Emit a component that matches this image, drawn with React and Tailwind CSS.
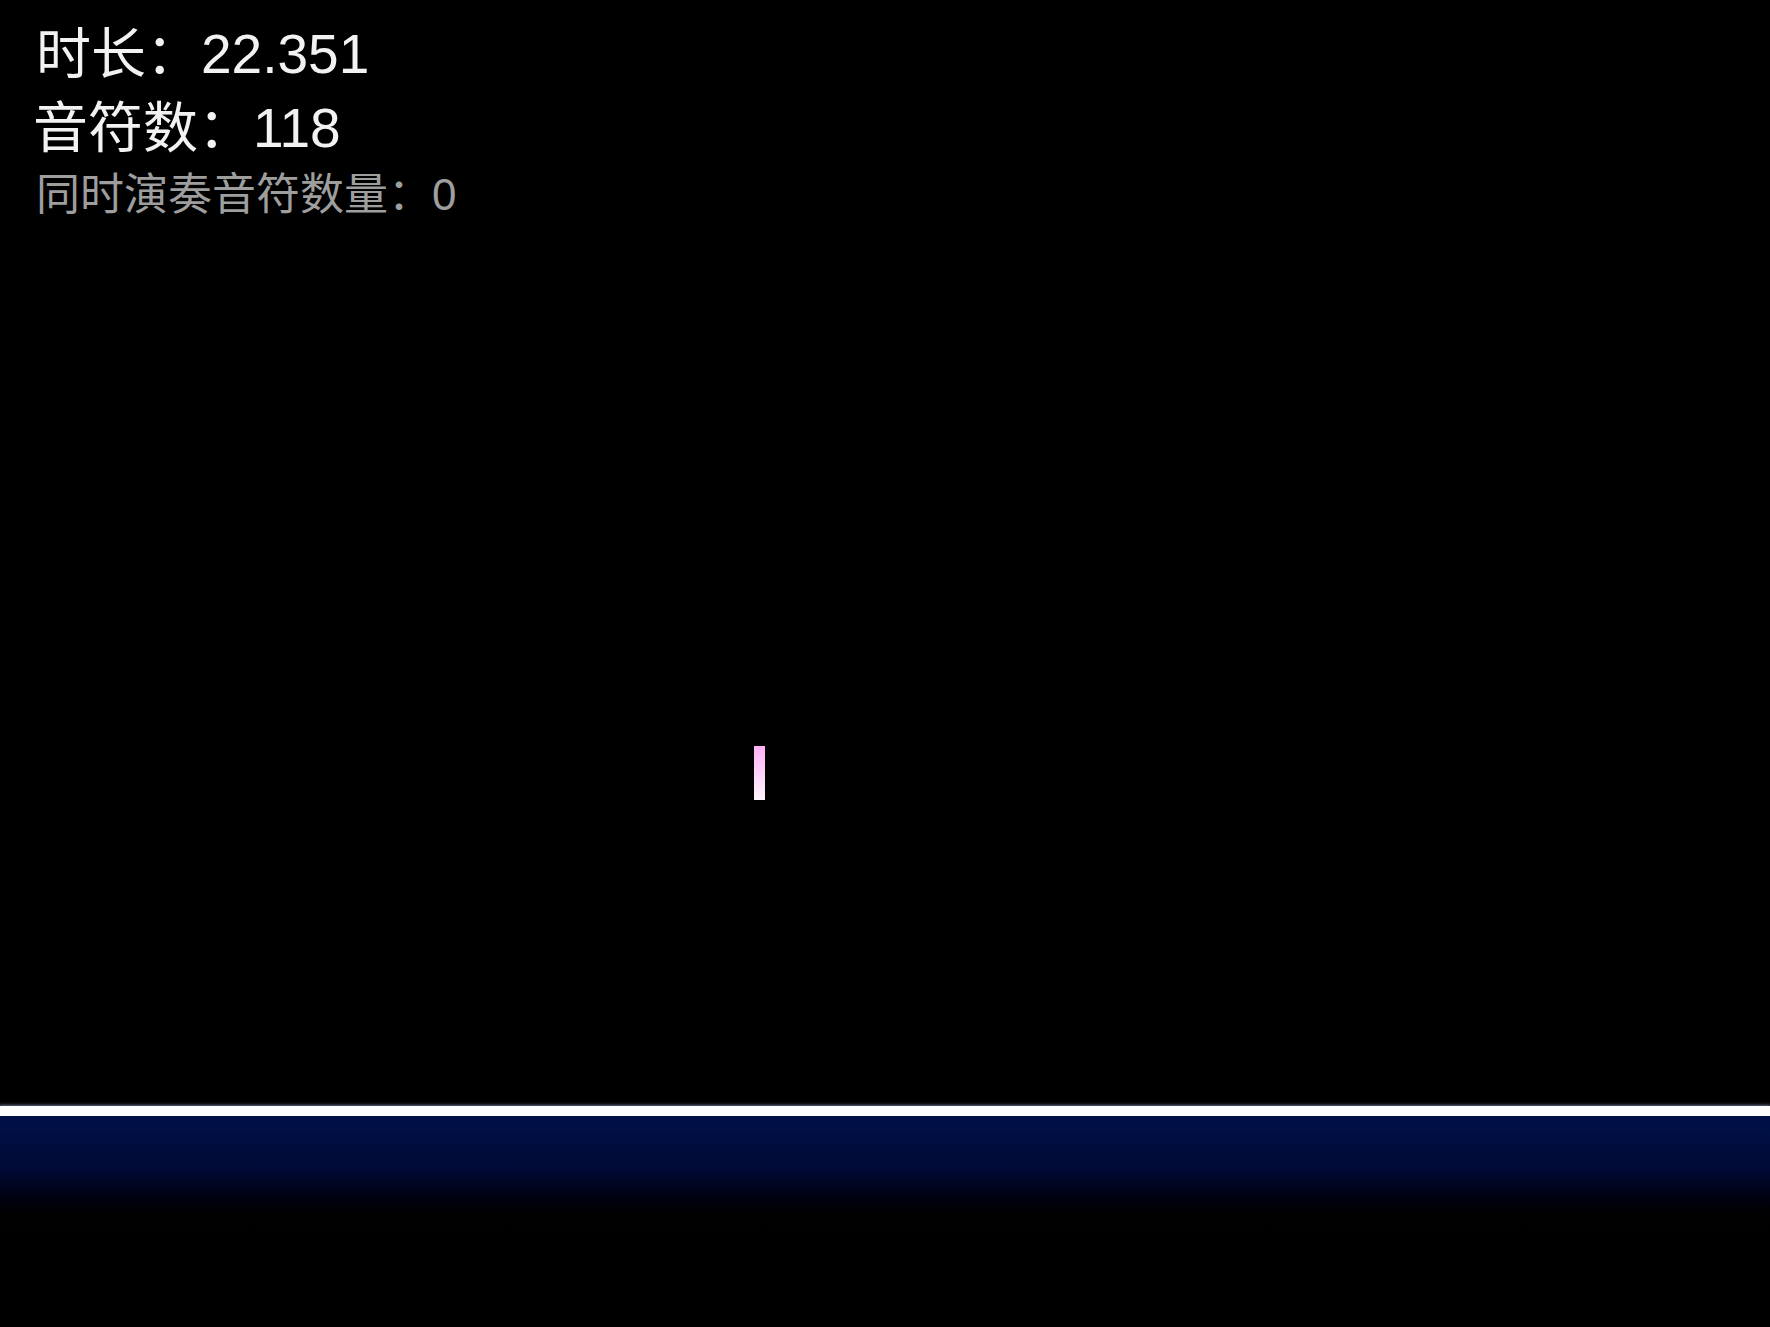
import React from 'react';

const FONT = { fontFamily: '"Liberation Sans", "Noto Sans CJK SC", sans-serif' };

const stats = [
  { label: '时长：', value: '22.351', cls: 'pl-[3px] text-[55px] leading-[74px] text-[#f2f2f2]' },
  { label: '音符数：', value: '118', cls: 'text-[55px] leading-[74px] text-[#f2f2f2]' },
  { label: '同时演奏音符数量：', value: '0', cls: 'pl-[3px] text-[44px] leading-[59px] text-[#9e9e9e]' },
];

export default function App() {
  return (
    <div className="relative flex h-screen w-full flex-col overflow-hidden bg-black" style={FONT}>
      {/* stats overlay */}
      <div className="pl-[33px] pt-[17px]">
        {stats.map((s) => (
          <div key={s.label} className={`whitespace-nowrap ${s.cls}`}>
            <span>{s.label}</span>
            <span>{s.value}</span>
          </div>
        ))}
      </div>

      <div className="flex-1" />

      {/* falling note */}
      <div className="absolute left-[754px] top-[746px] h-[54px] w-[11px] bg-linear-to-b from-[#ffb0f8] to-[#fff4fd]" />

      {/* hit line + glow */}
      <div className="h-[10px] w-full bg-white shadow-[0_0_3px_1px_rgba(150,160,200,0.7)]" />
      <div className="h-[211px] w-full bg-linear-to-b from-[#00114a] via-[#000a36] via-25% to-black to-55%" />
    </div>
  );
}
